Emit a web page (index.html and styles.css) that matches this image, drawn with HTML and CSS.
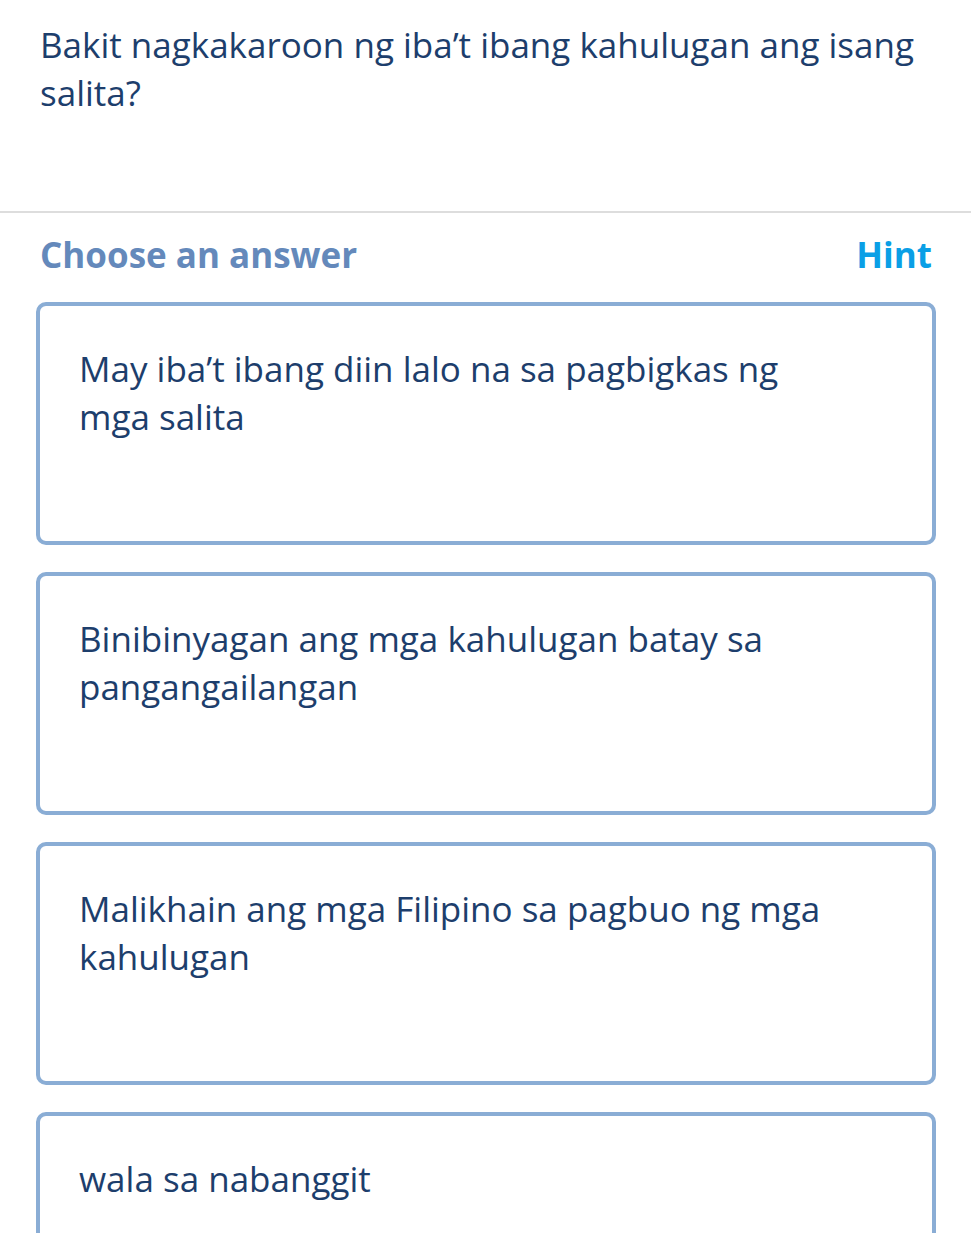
FILE: index.html
```html
<!DOCTYPE html>
<html lang="tl">
<head>
  <meta charset="UTF-8">
  <meta name="viewport" content="width=device-width, initial-scale=1">
  <title>Tanong</title>
  <link rel="stylesheet" href="styles.css">
</head>
<body>
  <div class="question">
    <p>Bakit nagkakaroon ng iba’t ibang kahulugan ang isang salita?</p>
  </div>
  <div class="answers">
    <div class="answers-head">
      <h2>Choose an answer</h2>
      <button class="hint">Hint</button>
    </div>
    <ul class="choices">
      <li class="choice">May iba’t ibang diin lalo na sa pagbigkas ng mga salita</li>
      <li class="choice">Binibinyagan ang mga kahulugan batay sa pangangailangan</li>
      <li class="choice">Malikhain ang mga Filipino sa pagbuo ng mga kahulugan</li>
      <li class="choice">wala sa nabanggit</li>
    </ul>
  </div>
</body>
</html>
```

FILE: styles.css
```css
:root {
  --text: #1d3e6c;
  --muted: #6489bb;
  --link: #0a9fe6;
  --border: #8aadd5;
  --rule: #dddddd;
}
* { box-sizing: border-box; margin: 0; padding: 0; }
body {
  background: #fff;
  font-family: 'Open Sans', 'Noto Sans', sans-serif;
  color: var(--text);
  font-size: 35px;
  line-height: 48px;
}
.question {
  padding: 21px 40px 0;
  height: 213px;
  border-bottom: 2px solid var(--rule);
}
.answers {
  padding: 0 35px 0 36px;
}
.answers-head {
  display: flex;
  justify-content: space-between;
  align-items: flex-start;
  padding: 18px 4px 0 4px;
  height: 89px;
}
.answers-head h2 {
  font-size: 35px;
  font-weight: 700;
  color: var(--muted);
  line-height: 48px;
}
.hint {
  background: none;
  border: none;
  font-family: inherit;
  font-size: 35px;
  font-weight: 700;
  color: var(--link);
  line-height: 48px;
  cursor: pointer;
}
.choices {
  list-style: none;
  display: flex;
  flex-direction: column;
  gap: 27px;
}
.choice {
  border: 4px solid var(--border);
  border-radius: 10px;
  min-height: 243px;
  padding: 39px 90px 39px 39px;
}
```
